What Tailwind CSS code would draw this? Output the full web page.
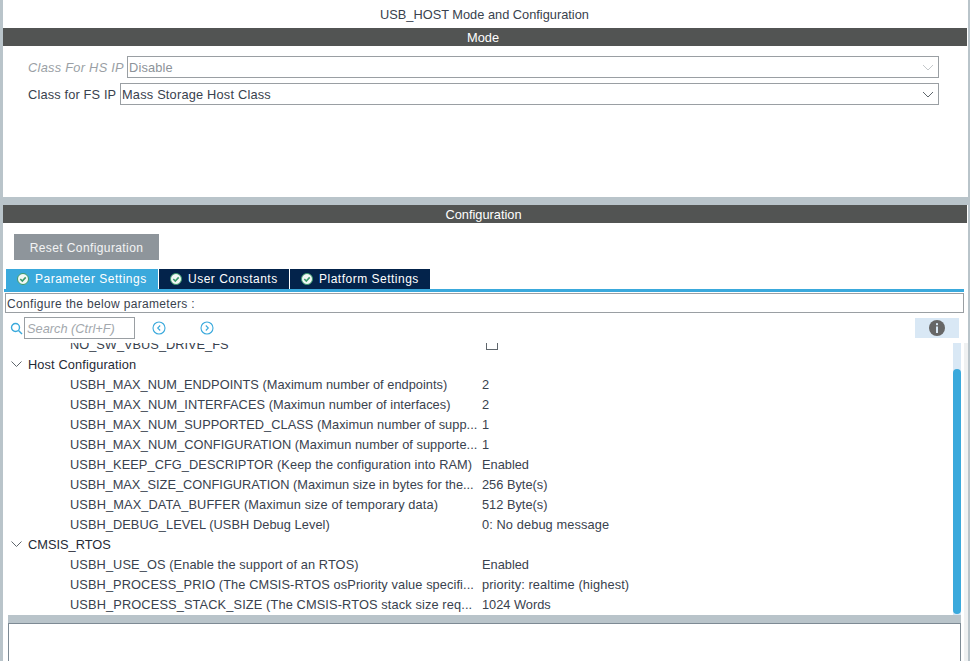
<!DOCTYPE html>
<html lang="en">
<head>
    <meta charset="UTF-8" />
    <title>USB_HOST Mode and Configuration</title>
    <script src="https://cdn.jsdelivr.net/npm/@tailwindcss/browser@4"></script>
</head>
<body class="bg-white">
<div class="flex w-[970px] h-[661px] overflow-hidden font-['Liberation_Sans',Arial,sans-serif] text-[12.8px] text-[#39424e]">
    <div class="w-[3px] shrink-0 bg-[#b9c4ca]"></div>

    <div class="w-[965px] shrink-0 flex flex-col">
        <div class="h-[28px] flex items-center justify-center pr-[2px] pt-[1px]">USB_HOST Mode and Configuration</div>
        <div class="h-[18px] mr-[1px] flex items-center justify-center pr-[4px] pt-[1px] bg-[#525453] text-white">Mode</div>

        <!-- mode panel -->
        <div class="h-[151px] flex flex-col pt-[10px] pl-[25px] gap-[5px]">
            <div class="flex h-[22px] items-center">
                <span class="w-[99px] shrink-0 italic text-[#9a9fa5] pt-[1px] tracking-[0.28px]">Class For HS IP</span>
                <div class="w-[812px] h-[22px] border border-[#9a9fa3] flex items-center justify-between pl-[1px] pr-[4px] text-[#8d9399]">
                    <span class="pt-[1px] tracking-[0.15px]">Disable</span>
                    <svg class="w-[12px] h-[7px]" viewBox="0 0 12 7" fill="none" stroke="#c4c8cb" stroke-width="1"><path d="M1 1l5 5 5-5"/></svg>
                </div>
            </div>
            <div class="flex h-[22px] items-center">
                <span class="w-[92px] shrink-0 pt-[1px] tracking-[0.15px]">Class for FS IP</span>
                <div class="w-[819px] h-[22px] border border-[#9a9fa3] flex items-center justify-between pl-[1px] pr-[4px]">
                    <span class="pt-[1px] tracking-[0.2px]">Mass Storage Host Class</span>
                    <svg class="w-[12px] h-[7px]" viewBox="0 0 12 7" fill="none" stroke="#5f666c" stroke-width="1"><path d="M1 1l5 5 5-5"/></svg>
                </div>
            </div>
        </div>

        <div class="h-[8px] bg-[#b9c4ca]"></div>
        <div class="h-[18px] mr-[1px] flex items-center justify-center pr-[3px] pt-[1px] bg-[#525453] text-white">Configuration</div>

        <!-- config panel -->
        <div class="flex-1 flex flex-col min-h-0">
            <div class="pt-[11px] pl-[11px]">
                <button class="w-[145px] h-[26px] bg-[#8e959b] text-white/90 text-[12px] tracking-[0.4px] flex items-center justify-center pt-[1px]">Reset Configuration</button>
            </div>

            <div class="flex mt-[9px] pl-[3px] gap-[1px] h-[20px] text-white text-[12px] tracking-[0.5px]">
                <div class="w-[152px] bg-[#3aa9dc] flex items-center pl-[11px] pb-[1px] gap-[6px]">
                    <svg class="w-[12px] h-[12px]" viewBox="0 0 12 12"><circle cx="6" cy="6" r="5.5" fill="#f2f8f5" stroke="#3b9a6b"/><path d="M3.3 6l2 2 3.4-3.6" fill="none" stroke="#3b9a6b" stroke-width="1.6"/></svg>
                    <span>Parameter Settings</span>
                </div>
                <div class="w-[130px] bg-[#03234b] flex items-center pl-[11px] pb-[1px] gap-[6px]">
                    <svg class="w-[12px] h-[12px]" viewBox="0 0 12 12"><circle cx="6" cy="6" r="5.5" fill="#f2f8f5" stroke="#3b9a6b"/><path d="M3.3 6l2 2 3.4-3.6" fill="none" stroke="#3b9a6b" stroke-width="1.6"/></svg>
                    <span>User Constants</span>
                </div>
                <div class="w-[140px] bg-[#03234b] flex items-center pl-[11px] pb-[1px] gap-[6px]">
                    <svg class="w-[12px] h-[12px]" viewBox="0 0 12 12"><circle cx="6" cy="6" r="5.5" fill="#f2f8f5" stroke="#3b9a6b"/><path d="M3.3 6l2 2 3.4-3.6" fill="none" stroke="#3b9a6b" stroke-width="1.6"/></svg>
                    <span>Platform Settings</span>
                </div>
            </div>
            <div class="h-[3px] ml-[1px] mr-[4px] bg-[#3aa9dc]"></div>

            <div class="ml-[2px] mr-[4px] mt-[1px] h-[20px] border border-[#9a9fa3] flex items-center pl-[1px] pt-[1px] text-[12px] tracking-[0.33px]">Configure the below parameters :</div>

            <!-- search row -->
            <div class="flex items-start h-[26px] mt-[4px] pl-[7px]">
                <svg class="mt-[5px] w-[13px] h-[13px]" viewBox="0 0 13 13" fill="none" stroke="#3aa9dc" stroke-width="1.4"><circle cx="5.5" cy="5.5" r="4"/><path d="M8.5 8.5l3.5 3.5"/></svg>
                <div class="ml-[1px] w-[111px] h-[22px] border border-[#9a9fa3] flex items-center pl-[2px] pt-[1px] italic text-[#a3a8ad]">Search (Ctrl+F)</div>
                <svg class="mt-[4px] ml-[17px] w-[14px] h-[14px]" viewBox="0 0 14 14" fill="none" stroke="#3aa9dc" stroke-width="1.1"><circle cx="7" cy="7" r="6"/><path d="M8.2 4.5L5.7 7l2.5 2.5"/></svg>
                <svg class="mt-[4px] ml-[34px] w-[14px] h-[14px]" viewBox="0 0 14 14" fill="none" stroke="#3aa9dc" stroke-width="1.1"><circle cx="7" cy="7" r="6"/><path d="M5.8 4.5L8.3 7l-2.5 2.5"/></svg>
                <div class="mt-[1px] ml-[701px] w-[44px] h-[20px] bg-[#d9e8f5] flex items-center justify-center">
                    <svg class="w-[16px] h-[16px]" viewBox="0 0 16 16"><circle cx="8" cy="8" r="8" fill="#666666"/><rect x="7" y="6.5" width="2" height="6.5" fill="#d9e8f5"/><rect x="7" y="3.2" width="2" height="2" fill="#d9e8f5"/></svg>
                </div>
            </div>

            <!-- tree -->
            <div class="h-[272px] flex overflow-hidden">
                <div class="w-[950px] mt-[-9px] shrink-0">
                    <div class="h-[20px] flex items-center"><span class="w-[67px] shrink-0"></span><span class="w-[416px] shrink-0 pt-[1px]">NO_SW_VBUS_DRIVE_FS</span><span class="w-[12px] h-[12px] border border-[#5f666c]"></span></div>
                    <div class="h-[20px] flex items-center"><svg class="ml-[8px] w-[11px] h-[6px]" viewBox="0 0 11 6" fill="none" stroke="#5f666c"><path d="M.5.5l5 5 5-5"/></svg><span class="ml-[6px] pt-[1px] tracking-[0.12px] text-[#1f2a36]">Host Configuration</span></div>
                    <div class="h-[20px] flex items-center"><span class="w-[67px] shrink-0"></span><span class="w-[412px] shrink-0 pt-[1px] tracking-[0.02px]">USBH_MAX_NUM_ENDPOINTS (Maximum number of endpoints)</span><span class="pt-[1px]">2</span></div>
                    <div class="h-[20px] flex items-center"><span class="w-[67px] shrink-0"></span><span class="w-[412px] shrink-0 pt-[1px] tracking-[0.04px]">USBH_MAX_NUM_INTERFACES (Maximun number of interfaces)</span><span class="pt-[1px]">2</span></div>
                    <div class="h-[20px] flex items-center"><span class="w-[67px] shrink-0"></span><span class="w-[412px] shrink-0 pt-[1px] tracking-[0.04px]">USBH_MAX_NUM_SUPPORTED_CLASS (Maximun number of supp...</span><span class="pt-[1px]">1</span></div>
                    <div class="h-[20px] flex items-center"><span class="w-[67px] shrink-0"></span><span class="w-[412px] shrink-0 pt-[1px] tracking-[0.04px]">USBH_MAX_NUM_CONFIGURATION (Maximun number of supporte...</span><span class="pt-[1px]">1</span></div>
                    <div class="h-[20px] flex items-center"><span class="w-[67px] shrink-0"></span><span class="w-[412px] shrink-0 pt-[1px] tracking-[0.07px]">USBH_KEEP_CFG_DESCRIPTOR (Keep the configuration into RAM)</span><span class="pt-[1px]">Enabled</span></div>
                    <div class="h-[20px] flex items-center"><span class="w-[67px] shrink-0"></span><span class="w-[412px] shrink-0 pt-[1px]">USBH_MAX_SIZE_CONFIGURATION (Maximun size in bytes for the...</span><span class="pt-[1px]">256 Byte(s)</span></div>
                    <div class="h-[20px] flex items-center"><span class="w-[67px] shrink-0"></span><span class="w-[412px] shrink-0 pt-[1px] tracking-[0.11px]">USBH_MAX_DATA_BUFFER (Maximun size of temporary data)</span><span class="pt-[1px]">512 Byte(s)</span></div>
                    <div class="h-[20px] flex items-center"><span class="w-[67px] shrink-0"></span><span class="w-[412px] shrink-0 pt-[1px] tracking-[0.06px]">USBH_DEBUG_LEVEL (USBH Debug Level)</span><span class="pt-[1px] tracking-[0.1px]">0: No debug message</span></div>
                    <div class="h-[20px] flex items-center"><svg class="ml-[8px] w-[11px] h-[6px]" viewBox="0 0 11 6" fill="none" stroke="#5f666c"><path d="M.5.5l5 5 5-5"/></svg><span class="ml-[6px] pt-[1px] text-[#1f2a36]">CMSIS_RTOS</span></div>
                    <div class="h-[20px] flex items-center"><span class="w-[67px] shrink-0"></span><span class="w-[412px] shrink-0 pt-[1px] tracking-[0.09px]">USBH_USE_OS (Enable the support of an RTOS)</span><span class="pt-[1px]">Enabled</span></div>
                    <div class="h-[20px] flex items-center"><span class="w-[67px] shrink-0"></span><span class="w-[412px] shrink-0 pt-[1px] tracking-[0.09px]">USBH_PROCESS_PRIO (The CMSIS-RTOS osPriority value specifi...</span><span class="pt-[1px] tracking-[0.1px]">priority: realtime (highest)</span></div>
                    <div class="h-[20px] flex items-center"><span class="w-[67px] shrink-0"></span><span class="w-[412px] shrink-0 pt-[1px] tracking-[0.12px]">USBH_PROCESS_STACK_SIZE (The CMSIS-RTOS stack size req...</span><span class="pt-[1px]">1024 Words</span></div>
                </div>
                <div class="w-[8px] bg-[#d9e8f5] relative">
                    <div class="absolute left-0 right-0 top-[26px] h-[245px] bg-[#3aa9dc] rounded-[4px]"></div>
                </div>
                <div class="ml-[3px] w-[4px] bg-[#eff1f2]"></div>
            </div>

            <div class="flex h-[46px]">
                <div class="ml-[5px] w-[953px] flex flex-col">
                    <div class="h-[8px] bg-[#b9c4ca]"></div>
                    <div class="flex-1 border border-[#7d8a94] border-b-0"></div>
                </div>
                <div class="ml-[3px] w-[4px] bg-[#eff1f2]"></div>
            </div>
        </div>
    </div>

    <div class="w-[2px] shrink-0 bg-[#b9c4ca]"></div>
</div>
</body>
</html>
